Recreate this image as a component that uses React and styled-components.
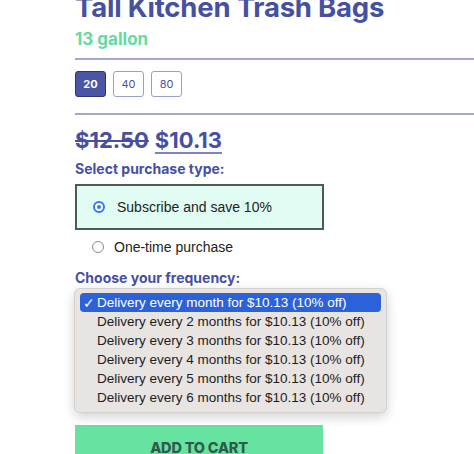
import React from "react";
import styled, { createGlobalStyle } from "styled-components";

const Global = createGlobalStyle`
  html, body { margin: 0; padding: 0; background: #ffffff; }
  body { font-family: "Liberation Sans", Arial, sans-serif; overflow: hidden; }
`;

const Page = styled.div`
  padding-left: 75px;
  width: 399px;
`;

const Title = styled.h1`
  margin: -10px 0 0 0;
  font-family: "Inter", "Liberation Sans", sans-serif;
  font-weight: 700;
  font-size: 27.5px;
  line-height: 34px;
  letter-spacing: -0.2px;
  color: #4650a0;
  white-space: nowrap;
`;

const Subtitle = styled.div`
  margin-top: 5px;
  font-family: "Inter", "Liberation Sans", sans-serif;
  font-weight: 700;
  font-size: 17px;
  line-height: 20px;
  color: #62dc9e;
`;

const Divider = styled.div`
  height: 2px;
  background: #a3a6cd;
  margin-top: ${(p) => p.$top}px;
`;

const SizeRow = styled.div`
  display: flex;
  gap: 7px;
  margin-top: 11px;
`;

const SizeButton = styled.button`
  width: 31px;
  height: 26px;
  padding: 0;
  border-radius: 3px;
  border: 1px solid ${(p) => (p.$active ? "#2e356f" : "#9aa0cc")};
  background: ${(p) => (p.$active ? "#4a55a3" : "#ffffff")};
  color: ${(p) => (p.$active ? "#ffffff" : "#4a55a3")};
  font-family: "Inter", "Liberation Sans", sans-serif;
  font-weight: ${(p) => (p.$active ? 700 : 400)};
  font-size: 11px;
`;

const PriceRow = styled.div`
  display: flex;
  gap: 6px;
  margin-top: 12px;
  font-family: "Inter", "Liberation Sans", sans-serif;
  font-weight: 700;
  font-size: 22px;
  line-height: 26px;
  color: #4650a0;
`;

const OldPrice = styled.span`
  text-decoration: line-through;
  text-decoration-thickness: 2px;
`;

const NewPrice = styled.span`
  text-decoration: underline;
  text-decoration-thickness: 2px;
  text-underline-offset: 4px;
  text-decoration-color: #7d84bf;
`;

const Label = styled.div`
  margin-top: ${(p) => p.$top}px;
  font-family: "Inter", "Liberation Sans", sans-serif;
  font-weight: 700;
  font-size: 14px;
  line-height: 18px;
  color: #4650a0;
`;

const OptionBox = styled.label`
  display: flex;
  align-items: center;
  gap: ${(p) => (p.$selected ? 12 : 10)}px;
  box-sizing: border-box;
  width: 249px;
  height: 46px;
  margin-top: ${(p) => p.$top}px;
  padding-left: ${(p) => (p.$selected ? 16 : 15)}px;
  border: 2px solid ${(p) => (p.$selected ? "#4b5a5a" : "transparent")};
  background: ${(p) => (p.$selected ? "#e0fcf3" : "transparent")};
  font-family: "Liberation Sans", Arial, sans-serif;
  font-size: 14px;
  color: #222;
`;

const Radio = styled.span`
  width: 12px;
  height: 12px;
  box-sizing: border-box;
  border-radius: 50%;
  border: ${(p) => (p.$checked ? "2px solid #3478f6" : "1.5px solid #8c8c8c")};
  display: flex;
  align-items: center;
  justify-content: center;
  background: #fff;
  &::after {
    content: "";
    display: ${(p) => (p.$checked ? "block" : "none")};
    width: 4px;
    height: 4px;
    border-radius: 50%;
    background: #3478f6;
  }
`;

const SelectArea = styled.div`
  position: relative;
  margin-top: 1px;
  height: 137px;
`;

const SelectStub = styled.div`
  position: absolute;
  left: 0;
  top: 20px;
  width: 249px;
  height: 26px;
  border-left: 2px solid #5a5a5a;
`;

const Menu = styled.div`
  position: absolute;
  left: -1px;
  top: 0;
  width: 313px;
  box-sizing: border-box;
  padding: 4px 5px 5px;
  background: #e7e4e2;
  border: 1px solid #d4d1cf;
  border-radius: 6px;
  box-shadow: 0 4px 12px rgba(0, 0, 0, 0.18);
  display: flex;
  flex-direction: column;
`;

const MenuItem = styled.div`
  display: flex;
  align-items: center;
  height: 19px;
  padding-left: 3px;
  border-radius: 4px;
  background: ${(p) => (p.$active ? "#2c62d9" : "transparent")};
  color: ${(p) => (p.$active ? "#ffffff" : "#1d1d1d")};
  font-family: "Liberation Sans", Arial, sans-serif;
  font-size: 13.5px;
  white-space: nowrap;
`;

const Check = styled.span`
  display: inline-block;
  width: 14px;
`;

const CartButton = styled.button`
  display: block;
  width: 248px;
  height: 40px;
  margin-top: 0;
  border: none;
  background: #66e3a0;
  color: #2f5b4d;
  font-family: "Inter", "Liberation Sans", sans-serif;
  font-weight: 800;
  font-size: 14.5px;
  letter-spacing: -0.2px;
  padding: 4px 0 0;
`;

const frequencies = [
  "Delivery every month for $10.13 (10% off)",
  "Delivery every 2 months for $10.13 (10% off)",
  "Delivery every 3 months for $10.13 (10% off)",
  "Delivery every 4 months for $10.13 (10% off)",
  "Delivery every 5 months for $10.13 (10% off)",
  "Delivery every 6 months for $10.13 (10% off)",
];

export default function App() {
  return (
    <>
      <Global />
      <Page>
        <Title>Tall Kitchen Trash Bags</Title>
        <Subtitle>13 gallon</Subtitle>
        <Divider $top={9} />
        <SizeRow>
          <SizeButton $active>20</SizeButton>
          <SizeButton>40</SizeButton>
          <SizeButton>80</SizeButton>
        </SizeRow>
        <Divider $top={16} />
        <PriceRow>
          <OldPrice>$12.50</OldPrice>
          <NewPrice>$10.13</NewPrice>
        </PriceRow>
        <Label $top={7}>Select purchase type:</Label>
        <OptionBox $selected $top={6}>
          <Radio $checked />
          Subscribe and save 10%
        </OptionBox>
        <OptionBox $top={-6}>
          <Radio />
          One-time purchase
        </OptionBox>
        <Label $top={-1}>Choose your frequency:</Label>
        <SelectArea>
          <SelectStub />
          <Menu>
            {frequencies.map((f, i) => (
              <MenuItem key={f} $active={i === 0}>
                <Check>{i === 0 ? "✓" : ""}</Check>
                {f}
              </MenuItem>
            ))}
          </Menu>
        </SelectArea>
        <CartButton>ADD TO CART</CartButton>
      </Page>
    </>
  );
}
